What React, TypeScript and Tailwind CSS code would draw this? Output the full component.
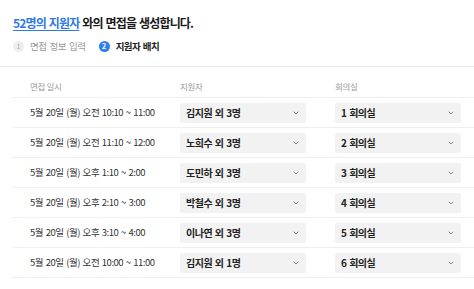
import { ChevronDown } from 'lucide-react';

const rows = [
  { time: '5월 20일 (월) 오전 10:10 ~ 11:00', applicant: '김지원 외 3명', room: '1 회의실' },
  { time: '5월 20일 (월) 오전 11:10 ~ 12:00', applicant: '노희수 외 3명', room: '2 회의실' },
  { time: '5월 20일 (월) 오후 1:10 ~ 2:00', applicant: '도민하 외 3명', room: '3 회의실' },
  { time: '5월 20일 (월) 오후 2:10 ~ 3:00', applicant: '박철수 외 3명', room: '4 회의실' },
  { time: '5월 20일 (월) 오후 3:10 ~ 4:00', applicant: '이나연 외 3명', room: '5 회의실' },
  { time: '5월 20일 (월) 오전 10:00 ~ 11:00', applicant: '김지원 외 1명', room: '6 회의실' },
];

function Select({ value }: { value: string }) {
  return (
    <div className="flex h-5 w-[126px] items-center justify-between rounded-[2px] bg-[#f2f2f2] pl-[6px] pr-[6px]">
      <span className="text-[10px] font-bold tracking-[-0.05em] text-[#222] [word-spacing:1px]">{value}</span>
      <ChevronDown className="h-[8px] w-[8px] text-[#777]" strokeWidth={2.5} />
    </div>
  );
}

export default function App() {
  return (
    <div
      className="h-[289px] w-[474px] overflow-hidden bg-white"
      style={{ fontFamily: '"Noto Sans CJK KR", "Noto Sans", sans-serif' }}
    >
      {/* title + steps */}
      <div className="px-[13px] pt-[13px]">
        <h1 className="text-[12px] font-bold leading-[20px] tracking-[-0.07em] text-[#1a1a1a] [word-spacing:1px]">
          <span className="text-[#2f7be5] underline decoration-[#2f7be5] underline-offset-2">52명의 지원자</span> 와의 면접을 생성합니다.
        </h1>
        <div className="mt-[3px] flex h-[20px] items-center">
          <span className="flex h-[11px] w-[11px] items-center justify-center rounded-full bg-[#eeeeee] text-[7px] leading-none text-[#aaa]">1</span>
          <span className="ml-[6px] text-[9.5px] tracking-[-0.04em] text-[#999] [word-spacing:1px]">면접 정보 입력</span>
          <span className="ml-[13px] flex h-[11px] w-[11px] items-center justify-center rounded-full bg-[#2f80ed] text-[7px] font-bold leading-none text-white">2</span>
          <span className="ml-[6px] text-[9.5px] font-bold tracking-[-0.06em] text-[#222] [word-spacing:1px]">지원자 배치</span>
        </div>
      </div>
      <div className="mt-[10px] border-t border-[#ececec]" />

      {/* table */}
      <div className="mt-[10px] pl-3">
        <div className="flex h-[21px] items-center border-b border-[#efefef] pb-[1px] text-[8.5px] tracking-[-0.04em] text-[#999]">
          <div className="w-[168px] pl-[18px]">면접 일시</div>
          <div className="w-[155px]">지원자</div>
          <div>회의실</div>
        </div>
        {rows.map((r) => (
          <div key={r.room} className="flex h-[30px] items-center border-b border-[#efefef]">
            <div className="w-[168px] pl-[18px] text-[9.5px] tracking-[-0.05em] text-[#333] [word-spacing:1px]">{r.time}</div>
            <div className="w-[155px]">
              <Select value={r.applicant} />
            </div>
            <div>
              <Select value={r.room} />
            </div>
          </div>
        ))}
      </div>
    </div>
  );
}
